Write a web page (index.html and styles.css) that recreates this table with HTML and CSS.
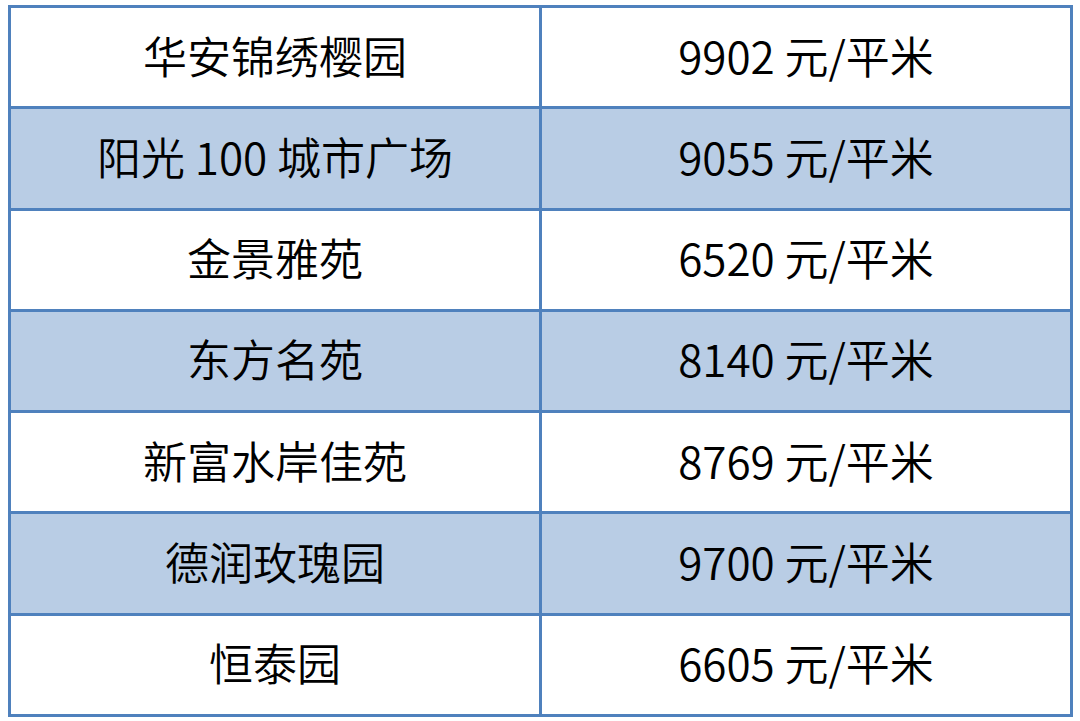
FILE: index.html
```html
<!DOCTYPE html>
<html lang="zh-CN">
<head>
<meta charset="utf-8">
<title>楼盘价格</title>
<link rel="stylesheet" href="styles.css">
</head>
<body>
<div class="price-table">
  <div class="cell">华安锦绣樱园</div><div class="cell">9902 元/平米</div>
  <div class="cell alt">阳光 100 城市广场</div><div class="cell alt">9055 元/平米</div>
  <div class="cell">金景雅苑</div><div class="cell">6520 元/平米</div>
  <div class="cell alt">东方名苑</div><div class="cell alt">8140 元/平米</div>
  <div class="cell">新富水岸佳苑</div><div class="cell">8769 元/平米</div>
  <div class="cell alt">德润玫瑰园</div><div class="cell alt">9700 元/平米</div>
  <div class="cell">恒泰园</div><div class="cell">6605 元/平米</div>
</div>
</body>
</html>
```
FILE: styles.css
```css
html, body {
  margin: 0;
  padding: 0;
  background: #ffffff;
}
body {
  padding: 5px 0 0 8px;
}
.price-table {
  box-sizing: border-box;
  width: 1065px;
  height: 712px;
  display: grid;
  grid-template-columns: 1fr 1fr;
  grid-template-rows: repeat(7, 1fr);
  gap: 3px;
  padding: 3px;
  background: #4f81bd;
}
.cell {
  box-sizing: border-box;
  padding-bottom: 5px;
  background: #ffffff;
  display: flex;
  align-items: center;
  justify-content: center;
  font-family: "Noto Sans CJK SC", "Noto Sans", sans-serif;
  font-size: 44px;
  font-weight: 350;
  color: #000000;
  line-height: 1;
  white-space: pre;
}
.cell.alt {
  background: #b9cde5;
}
```
